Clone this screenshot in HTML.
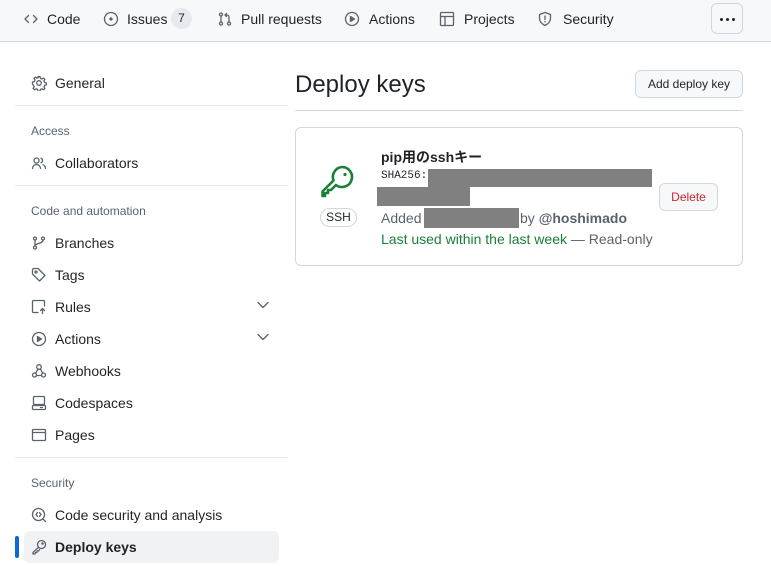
<!DOCTYPE html>
<html><head><meta charset="utf-8"><style>
*{box-sizing:border-box;margin:0;padding:0}
body{width:771px;height:566px;overflow:hidden;background:#fff;font-family:"Liberation Sans","Noto Sans CJK JP",sans-serif;color:#1f2328;font-size:14px;position:relative}
.hdr{position:absolute;left:0;top:0;width:771px;height:42px;background:#f6f8fa;border-bottom:1px solid #d0d7de}
.tab{position:absolute;top:0;height:38px;line-height:38px;font-size:14px;color:#1f2328}
.tab svg{position:absolute;left:0;top:11px}
.tab span.t{position:absolute;white-space:nowrap}
.cnt{position:absolute;left:171px;top:8px;width:21px;height:21px;border-radius:11px;background:#e6eaef;font-size:12px;line-height:21px;text-align:center;color:#1f2328}
.more{position:absolute;left:711px;top:3px;width:32px;height:31px;border:1px solid #d0d7de;border-radius:6px;background:#f6f8fa}
.more i{position:absolute;top:14px;width:3px;height:3px;border-radius:2px;background:#1f2328}
.si{position:absolute;left:31px;font-size:14px;color:#1f2328;height:20px;line-height:20px}
.si svg{position:absolute;left:0;top:2px}
.si span{position:absolute;left:24px;white-space:nowrap}
.sh{position:absolute;left:31px;font-size:12px;color:#59636e}
.div{position:absolute;left:15px;width:272px;height:1px;background:#e5e8eb}
.chev{position:absolute;left:256px}
svg.i{fill:none;stroke:#59636e;stroke-width:1.3;stroke-linecap:round;stroke-linejoin:round}
.gray{position:absolute;background:#808080}
</style></head><body>
<div class="hdr">
 <div class="tab" style="left:23px"><svg class="i" width="16" height="16" viewBox="0 0 16 16"><path d="M5.5 4.5 2 8l3.5 3.5M10.5 4.5 14 8l-3.5 3.5"/></svg><span class="t" style="left:24px">Code</span></div>
 <div class="tab" style="left:103px"><svg class="i" width="16" height="16" viewBox="0 0 16 16"><circle cx="8" cy="8" r="6.5"/><circle cx="8" cy="8" r="1" fill="#59636e"/></svg><span class="t" style="left:24px">Issues</span></div>
 <div class="cnt">7</div>
 <div class="tab" style="left:217px"><svg class="i" width="16" height="16" viewBox="0 0 16 16"><circle cx="4" cy="3.5" r="1.5"/><circle cx="4" cy="12.5" r="1.5"/><circle cx="12" cy="12.5" r="1.5"/><path d="M4 5v6M12 11V6a2 2 0 0 0-2-2H8M9.5 2.5 8 4l1.5 1.5"/></svg><span class="t" style="left:24px">Pull requests</span></div>
 <div class="tab" style="left:344px"><svg class="i" width="16" height="16" viewBox="0 0 16 16"><circle cx="8" cy="8" r="6.5"/><path d="M6.5 5.5v5l4-2.5z" fill="#59636e"/></svg><span class="t" style="left:25px">Actions</span></div>
 <div class="tab" style="left:439px"><svg class="i" width="16" height="16" viewBox="0 0 16 16"><rect x="1.5" y="1.5" width="13" height="13" rx="1"/><path d="M1.5 5.5h13M6 5.5v9"/></svg><span class="t" style="left:25px">Projects</span></div>
 <div class="tab" style="left:537px"><svg class="i" width="16" height="16" viewBox="0 0 16 16"><path d="M8 1.5 2.5 3.5v4c0 3.5 2.5 5.5 5.5 7 3-1.5 5.5-3.5 5.5-7v-4z"/><path d="M8 5v3.5M8 10.5v.5"/></svg><span class="t" style="left:26px">Security</span></div>
 <div class="more"><i style="left:8px"></i><i style="left:14px"></i><i style="left:20px"></i></div>
</div>

<div class="si" style="top:73px"><svg class="i" width="16" height="16" viewBox="0 0 16 16"><circle cx="8" cy="8" r="2.3"/><path d="M7 1.5h2l.4 1.8 1.5.7 1.6-1 1.4 1.4-1 1.6.7 1.5 1.8.4v2l-1.8.4-.7 1.5 1 1.6-1.4 1.4-1.6-1-1.5.7-.4 1.8H7l-.4-1.8-1.5-.7-1.6 1-1.4-1.4 1-1.6-.7-1.5L1.5 9V7l1.8-.4.7-1.5-1-1.6 1.4-1.4 1.6 1 1.5-.7z"/></svg><span>General</span></div>
<div class="div" style="top:105px"></div>
<div class="sh" style="top:124px">Access</div>
<div class="si" style="top:153px"><svg class="i" width="16" height="16" viewBox="0 0 16 16"><circle cx="5.5" cy="5.5" r="2.5"/><path d="M1.5 13.5c0-2.5 2-4 4-4s4 1.5 4 4M10 3.2a2.5 2.5 0 0 1 0 4.6M12 9.8c1.5.6 2.5 2 2.5 3.7"/></svg><span>Collaborators</span></div>
<div class="div" style="top:185px"></div>
<div class="sh" style="top:204px">Code and automation</div>
<div class="si" style="top:233px"><svg class="i" width="16" height="16" viewBox="0 0 16 16"><circle cx="4" cy="3.5" r="1.5"/><circle cx="4" cy="12.5" r="1.5"/><circle cx="12" cy="3.5" r="1.5"/><path d="M4 5v6M12 5c0 4-8 3-8 6"/></svg><span>Branches</span></div>
<div class="si" style="top:265px"><svg class="i" width="16" height="16" viewBox="0 0 16 16"><path d="M1.5 2.5v4.5l7 7 5.5-5.5-7-7H2.5z"/><circle cx="5" cy="5" r="1"/></svg><span>Tags</span></div>
<div class="si" style="top:297px"><svg class="i" width="16" height="16" viewBox="0 0 16 16"><path d="M7 13.5H2.5a1 1 0 0 1-1-1v-10a1 1 0 0 1 1-1h10a1 1 0 0 1 1 1V7M11.5 14.5v-5M9.5 11.5l2-2 2 2"/></svg><span>Rules</span></div>
<svg class="i chev" style="top:300px" width="14" height="10" viewBox="0 0 14 10"><path d="M2 2.5l5 5 5-5"/></svg>
<div class="si" style="top:329px"><svg class="i" width="16" height="16" viewBox="0 0 16 16"><circle cx="8" cy="8" r="6.5"/><path d="M6.5 5.5v5l4-2.5z" fill="#59636e"/></svg><span>Actions</span></div>
<svg class="i chev" style="top:332px" width="14" height="10" viewBox="0 0 14 10"><path d="M2 2.5l5 5 5-5"/></svg>
<div class="si" style="top:361px"><svg class="i" width="16" height="16" viewBox="0 0 16 16"><circle cx="8" cy="4" r="2.3"/><circle cx="3.5" cy="12" r="2"/><circle cx="12.5" cy="12" r="2"/><path d="M7 6 4.5 10.5M9.5 6l2 4M5.5 12.5h5"/></svg><span>Webhooks</span></div>
<div class="si" style="top:393px"><svg class="i" width="16" height="16" viewBox="0 0 16 16"><rect x="2.5" y="1.5" width="11" height="8" rx="1"/><rect x="1.5" y="10.5" width="13" height="4" rx="1"/><path d="M9.5 12.5h2"/></svg><span>Codespaces</span></div>
<div class="si" style="top:425px"><svg class="i" width="16" height="16" viewBox="0 0 16 16"><rect x="1.5" y="2.5" width="13" height="11" rx="1"/><path d="M1.5 5.5h13"/></svg><span>Pages</span></div>
<div class="div" style="top:457px"></div>
<div class="sh" style="top:476px">Security</div>
<div class="si" style="top:505px"><svg class="i" width="16" height="16" viewBox="0 0 16 16"><circle cx="7.5" cy="7.5" r="6"/><path d="M12 12l2.5 2.5M6.5 5.5 5 7.5l1.5 2M8.5 5.5l1.5 2-1.5 2"/></svg><span>Code security and analysis</span></div>
<div style="position:absolute;left:24px;top:531px;width:255px;height:32px;border-radius:6px;background:#f0f2f4"></div>
<div style="position:absolute;left:15px;top:536px;width:4px;height:22px;border-radius:2px;background:#0969da"></div>
<div class="si" style="top:537px;font-weight:bold"><svg class="i" width="16" height="16" viewBox="0 0 16 16"><circle cx="10.5" cy="5.5" r="4"/><path d="M7.5 8.3 2 13.5v1.5h2l.5-1.5H6V12h1.5l1-1.3"/><circle cx="11.5" cy="4.5" r=".6" fill="#59636e"/></svg><span>Deploy keys</span></div>

<div style="position:absolute;left:295px;top:71px;font-size:24px;color:#1f2328;white-space:nowrap">Deploy keys</div>
<div style="position:absolute;left:635px;top:70px;width:108px;height:28px;border:1px solid #d0d7de;border-radius:6px;background:#f6f8fa;font-size:12px;line-height:26px;text-align:center">Add deploy key</div>
<div style="position:absolute;left:295px;top:110px;width:448px;height:1px;background:#d0d7de"></div>

<div style="position:absolute;left:295px;top:127px;width:448px;height:139px;border:1px solid #d0d7de;border-radius:6px"></div>
<svg style="position:absolute;left:320px;top:164px" width="36" height="36" viewBox="0 0 36 36" fill="none" stroke="#1a7f37" stroke-width="2.6" stroke-linejoin="round" stroke-linecap="round"><path d="M22 3a10 10 0 1 1-6 18l-5 5h-3v3H5v3H2.5v-4.5L13.5 16.5A10 10 0 0 1 22 3z"/><circle cx="25" cy="10.5" r="1.6" fill="#1a7f37" stroke="none"/></svg>
<div style="position:absolute;left:320px;top:208px;width:37px;height:19px;border:1px solid #d0d7de;border-radius:10px;font-size:12px;line-height:17px;text-align:center">SSH</div>
<div style="position:absolute;left:381px;top:147px;font-size:14px;font-weight:bold;white-space:nowrap">pip用のsshキー</div>
<div style="position:absolute;left:381px;top:170px;font-family:'Liberation Mono',monospace;font-size:11px">SHA256:</div>
<div class="gray" style="left:428px;top:169px;width:224px;height:18px"></div>
<div class="gray" style="left:377px;top:187px;width:93px;height:19px"></div>
<div style="position:absolute;left:381px;top:210px;font-size:14px;color:#59636e;white-space:nowrap">Added</div>
<div class="gray" style="left:424px;top:208px;width:95px;height:20px"></div>
<div style="position:absolute;left:520px;top:210px;font-size:14px;color:#59636e;white-space:nowrap">by <b>@hoshimado</b></div>
<div style="position:absolute;left:381px;top:231px;font-size:14px;white-space:nowrap;color:#59636e"><span style="color:#1a7f37">Last used within the last week</span> — Read-only</div>
<div style="position:absolute;left:659px;top:183px;width:59px;height:28px;border:1px solid #d0d7de;border-radius:6px;background:#f6f8fa;color:#d1242f;font-size:12px;line-height:26px;text-align:center">Delete</div>
</body></html>
